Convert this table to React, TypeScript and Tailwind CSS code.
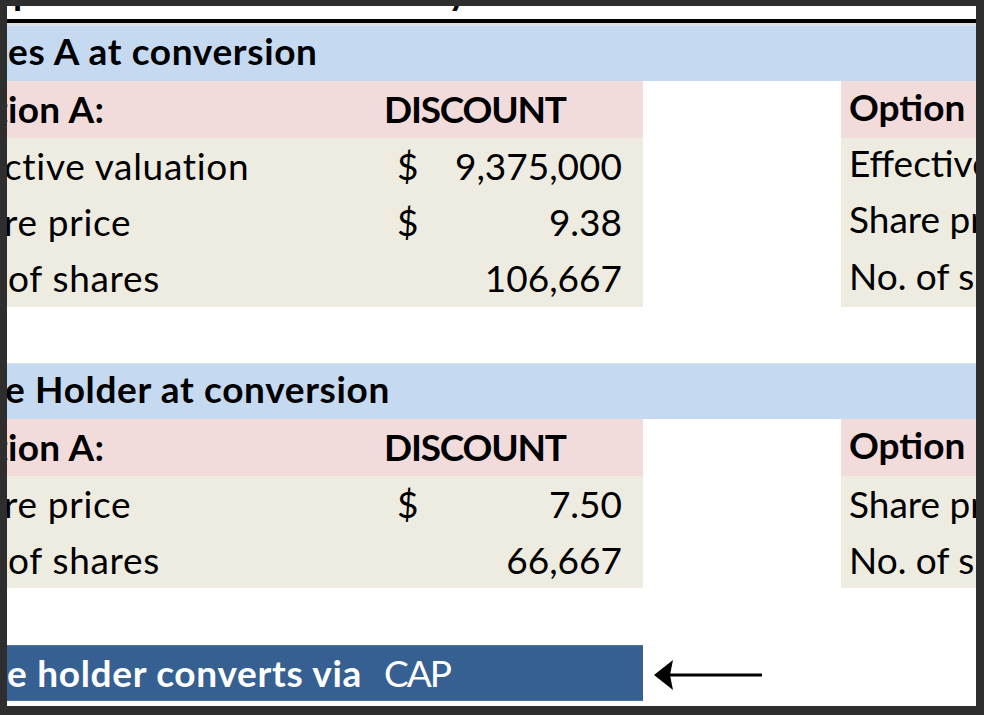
import type { ReactNode } from 'react'

// text whose start lies left of the visible sheet area: the prefix overflows to the left and is clipped
function Clipped({ hidden, children }: { hidden: string; children: ReactNode }) {
  return (
    <span className="flex whitespace-nowrap">
      <span className="flex w-0 justify-end">
        <span className="shrink-0">{hidden}</span>
      </span>
      {children}
    </span>
  )
}

interface Row {
  hidden: string
  label: string
  indent: string
  dollar: boolean
  value: string
  right: string
}

interface SectionProps {
  titleHidden: string
  title: string
  titleIndent: string
  rowLift: string
  rows: Row[]
}

function Section({ titleHidden, title, titleIndent, rowLift, rows }: SectionProps) {
  return (
    <div>
      <div className={`flex h-[56.33px] items-center border-t border-[#d6e3f4] bg-[#c5d9f1] pb-[6px] font-bold tracking-[0.65px] ${titleIndent}`}>
        <Clipped hidden={titleHidden}>{title}</Clipped>
      </div>

      <div className="flex h-[56.33px] font-bold">
        <div className="grid w-[636px] grid-cols-[378px_1fr] items-center bg-[#f2dcdb] pb-[6px]">
          <div className="pl-px tracking-[0.3px]">
            <Clipped hidden="Opt">ion A:</Clipped>
          </div>
          <div className="-ml-[1px] tracking-[-1.2px]">DISCOUNT</div>
        </div>
        <div className="ml-[198px] flex flex-1 items-center overflow-hidden whitespace-nowrap bg-[#f2dcdb] pb-[6px] pl-[8px]">
          Option B:
        </div>
      </div>

      {rows.map((row) => (
        <div key={row.label} className="flex h-[56.33px]">
          <div className={`grid w-[636px] grid-cols-[378px_1fr] items-center bg-[#eeece1] ${rowLift}`}>
            <div className={`tracking-[0.7px] ${row.indent}`}>
              <Clipped hidden={row.hidden}>{row.label}</Clipped>
            </div>
            <div className="flex items-center justify-between pl-[12px] pr-[21px]">
              <span>{row.dollar ? '$' : ''}</span>
              <span>{row.value}</span>
            </div>
          </div>
          <div className={`ml-[198px] flex flex-1 items-center overflow-hidden whitespace-nowrap bg-[#eeece1] pl-[8px] ${rowLift}`}>
            {row.right}
          </div>
        </div>
      ))}

      <div className="h-[56.33px]" />
    </div>
  )
}

const seriesRows: Row[] = [
  { hidden: 'Effe', label: 'ctive valuation', indent: '-ml-[3px]', dollar: true, value: '9,375,000', right: 'Effective valuation' },
  { hidden: 'Sha', label: 're price', indent: '-ml-[3px]', dollar: true, value: '9.38', right: 'Share price' },
  { hidden: 'No. ', label: 'of shares', indent: 'pl-px', dollar: false, value: '106,667', right: 'No. of shares' },
]

const holderRows: Row[] = [
  { hidden: 'Sha', label: 're price', indent: '-ml-[3px]', dollar: true, value: '7.50', right: 'Share price' },
  { hidden: 'No. ', label: 'of shares', indent: 'pl-px', dollar: false, value: '66,667', right: 'No. of shares' },
]

export default function App() {
  return (
    <div className="h-[715px] w-[984px] bg-[#2e2e2e] pb-[9px] pl-[7px] pr-[8px] pt-[6px] font-['Lato',sans-serif] text-[37px] text-black">
      <div className="h-[700px] overflow-hidden bg-white">
        {/* bottom of the title line above, only its descenders show */}
        <div className="h-[13px] overflow-hidden">
          <div className="-mt-[34px] flex h-[37px] font-bold leading-none">
            <span className="ml-[6px]">p</span>
            <span className="ml-[414px]">y</span>
          </div>
        </div>
        <div className="h-[4px] bg-black" />
        <div className="h-[2px] bg-[#dcdcdc]" />

        <Section titleHidden="Seri" title="es A at conversion" titleIndent="pl-[1px]" rowLift="pb-[6px]" rows={seriesRows} />
        <Section titleHidden="Not" title="e Holder at conversion" titleIndent="-ml-[2px]" rowLift="" rows={holderRows} />

        <div className="flex h-[56.33px]">
          <div className="flex w-[636px] items-center border-y border-[#4b74a3] bg-[#366092] text-white">
            <Clipped hidden="Not">
              <span className="font-bold tracking-[0.7px]">e holder converts via</span>
              <span className="ml-[22px] tracking-[-2px]">CAP</span>
            </Clipped>
          </div>
          <svg className="ml-[11px] mt-[14px]" width="110" height="33" viewBox="0 0 110 33">
            <polygon points="0,16 19,1 16,16 19,31" fill="#000" />
            <line x1="16" y1="16" x2="108" y2="16" stroke="#000" strokeWidth="3" />
          </svg>
        </div>
      </div>
    </div>
  )
}
